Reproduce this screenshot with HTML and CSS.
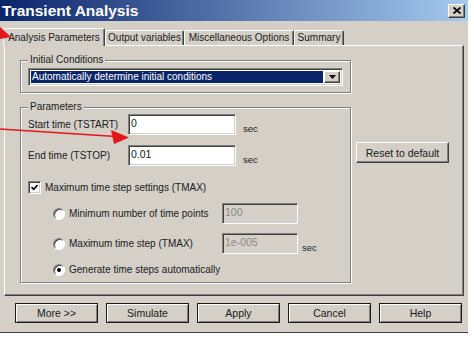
FILE: index.html
```html
<!DOCTYPE html>
<html lang="en">

<head>
    <meta charset="UTF-8" />
    <meta name="viewport" content="width=device-width, initial-scale=1.0" />
    <title>Transient Analysis</title>
    <link rel="stylesheet" href="styles.css">
</head>

<body>
    <div class="dialog">
        <!-- title bar -->
        <div class="title-bar">
            <span class="title">Transient Analysis</span>
            <div class="close-btn">
                <svg width="8" height="7" viewBox="0 0 8 7">
                    <path d="M0.5 0.5 L7.5 6.5 M7.5 0.5 L0.5 6.5" stroke="#000" stroke-width="1.8" />
                </svg>
            </div>
        </div>

        <!-- tabs -->
        <div class="tabs">
            <div class="tab active tab-analysis">Analysis Parameters</div>
            <div class="tab tab-output">Output variables</div>
            <div class="tab tab-misc">Miscellaneous Options</div>
            <div class="tab tab-summary">Summary</div>
        </div>

        <!-- tab page -->
        <div class="panel">
            <div class="panel-left">
                <fieldset class="group group-initial">
                    <legend>Initial Conditions</legend>
                    <div class="combo">
                        <div class="combo-value">Automatically determine initial conditions</div>
                        <div class="combo-arrow">
                            <svg width="7" height="4" viewBox="0 0 7 4">
                                <path d="M0 0 H7 L3.5 4 Z" fill="#000" />
                            </svg>
                        </div>
                    </div>
                </fieldset>

                <fieldset class="group group-params">
                    <legend>Parameters</legend>

                    <div class="field-row">
                        <span class="field-label">Start time (TSTART)</span>
                        <div class="text-box">0</div>
                        <span class="unit">sec</span>
                    </div>

                    <div class="field-row row-gap">
                        <span class="field-label">End time (TSTOP)</span>
                        <div class="text-box">0.01</div>
                        <span class="unit">sec</span>
                    </div>

                    <div class="check-row">
                        <span class="checkbox">
                            <svg width="7" height="7" viewBox="0 0 7 7">
                                <path d="M0.5 3 L2.7 5.3 L6.5 1" fill="none" stroke="#000" stroke-width="1.6" />
                            </svg>
                        </span>
                        <span>Maximum time step settings (TMAX)</span>
                    </div>

                    <div class="radio-row first">
                        <span class="radio-label">
                            <span class="radio"></span>
                            <span>Minimum number of time points</span>
                        </span>
                        <div class="text-box disabled">100</div>
                    </div>

                    <div class="radio-row">
                        <span class="radio-label">
                            <span class="radio"></span>
                            <span>Maximum time step (TMAX)</span>
                        </span>
                        <div class="text-box disabled">1e-005</div>
                        <span class="unit">sec</span>
                    </div>

                    <div class="radio-row last">
                        <span class="radio-label">
                            <span class="radio checked"></span>
                            <span>Generate time steps automatically</span>
                        </span>
                    </div>
                </fieldset>
            </div>

            <div class="panel-right">
                <div class="btn reset-btn">Reset to default</div>
            </div>
        </div>

        <!-- bottom buttons -->
        <div class="button-row">
            <div class="btn dlg-btn">More &gt;&gt;</div>
            <div class="btn dlg-btn">Simulate</div>
            <div class="btn dlg-btn">Apply</div>
            <div class="btn dlg-btn">Cancel</div>
            <div class="btn dlg-btn">Help</div>
        </div>

        <!-- red annotation arrows drawn over the screenshot -->
        <svg class="annotations" width="468" height="333" viewBox="0 0 468 333">
            <polygon points="0,27 11,37 0,39" fill="#e3161c" />
            <line x1="0" y1="129" x2="116" y2="136.5" stroke="#e3161c" stroke-width="1.6" />
            <polygon points="129,137.5 111,130 114,144" fill="#e3161c" />
        </svg>
    </div>
</body>

</html>
```

FILE: styles.css
```css
html,
body {
    margin: 0;
    background-color: #ffffff;
    font-family: "Liberation Sans", Arial, sans-serif;
    font-size: 10px;
    color: #1a1a1a;
}

.dialog {
    position: relative;
    width: 468px;
    height: 333px;
    box-sizing: border-box;
    background-color: #d4d0c8;
    border-bottom: 1px solid #404040;
    overflow: hidden;
}

/* title bar */
.title-bar {
    height: 21px;
    display: flex;
    align-items: center;
    justify-content: space-between;
    padding: 0 3px 0 2px;
    background: linear-gradient(to right, #0a246a, #a6caf0);
}

.title {
    color: #ffffff;
    font-weight: bold;
    font-size: 15.5px;
}

.close-btn {
    width: 17px;
    height: 14px;
    box-sizing: border-box;
    display: flex;
    align-items: center;
    justify-content: center;
    background-color: #d4d0c8;
    border: 1px solid;
    border-color: #ffffff #404040 #404040 #ffffff;
    box-shadow: inset -1px -1px 0 #808080;
}

/* tabs */
.tabs {
    display: flex;
    align-items: flex-end;
    height: 17px;
    margin-top: 7px;
    padding-left: 3px;
}

.tab {
    box-sizing: border-box;
    height: 15px;
    line-height: 13px;
    text-align: center;
    white-space: nowrap;
    border: 1px solid;
    border-bottom: none;
    border-color: #ffffff #404040 transparent #ffffff;
    border-radius: 2px 2px 0 0;
    box-shadow: inset -1px 0 0 #808080;
    background-color: #d4d0c8;
}

.tab.active {
    position: relative;
    z-index: 1;
    height: 18px;
    margin-bottom: -1px;
    padding-top: 2px;
}

.tab-analysis {
    width: 102px;
}

.tab-output {
    width: 79px;
}

.tab-misc {
    width: 110px;
}

.tab-summary {
    width: 50px;
}

/* tab page */
.panel {
    display: flex;
    margin: 0 4px;
    height: 251px;
    box-sizing: border-box;
    padding: 8px 0 0 15px;
    border: 1px solid;
    border-color: #ffffff #404040 #404040 #ffffff;
    box-shadow: inset -1px -1px 0 #808080;
}

.group {
    width: 331px;
    box-sizing: border-box;
    margin: 0;
    border: 1px solid #808080;
    box-shadow: inset 1px 1px 0 #ffffff, 1px 1px 0 #ffffff;
}

.group legend {
    padding: 0 2px;
    line-height: 12px;
    background-color: #d4d0c8;
}

.group-initial {
    padding: 2px 7px 6px 7px;
}

.group-params {
    margin-top: 8px;
    padding: 1px 7px 5px 7px;
}

/* combo box */
.combo {
    display: flex;
    height: 18px;
    box-sizing: border-box;
    padding: 1px;
    background-color: #ffffff;
    border: 1px solid;
    border-color: #808080 #ffffff #ffffff #808080;
    box-shadow: inset 1px 1px 0 #404040, inset -1px -1px 0 #d4d0c8;
}

.combo-value {
    flex: 1;
    margin: 1px;
    padding-left: 1px;
    line-height: 12px;
    background-color: #0a246a;
    color: #ffffff;
}

.combo-arrow {
    width: 16px;
    margin: 1px 1px 1px 0;
    box-sizing: border-box;
    display: flex;
    align-items: center;
    justify-content: center;
    background-color: #d4d0c8;
    border: 1px solid;
    border-color: #ffffff #404040 #404040 #ffffff;
    box-shadow: inset -1px -1px 0 #808080;
}

/* text fields */
.field-row {
    display: flex;
    align-items: center;
    height: 21px;
}

.row-gap {
    margin-top: 10px;
}

.field-label {
    width: 100px;
}

.text-box {
    width: 108px;
    height: 21px;
    box-sizing: border-box;
    padding: 2px 0 0 2px;
    line-height: 13px;
    font-size: 10.5px;
    background-color: #ffffff;
    border: 1px solid;
    border-color: #808080 #ffffff #ffffff #808080;
    box-shadow: inset 1px 1px 0 #404040, inset -1px -1px 0 #d4d0c8;
}

.text-box.disabled {
    width: 76px;
    background-color: #d4d0c8;
    color: #8a8a8a;
}

.unit {
    align-self: flex-end;
    margin-left: 7px;
    margin-bottom: 1px;
    font-size: 9.5px;
}

.radio-row .unit {
    margin-left: 4px;
}

/* checkbox */
.check-row {
    display: flex;
    align-items: center;
    gap: 4px;
    height: 15px;
    margin-top: 14px;
}

.checkbox {
    width: 13px;
    height: 13px;
    box-sizing: border-box;
    display: flex;
    align-items: center;
    justify-content: center;
    background-color: #ffffff;
    border: 1px solid;
    border-color: #808080 #ffffff #ffffff #808080;
    box-shadow: inset 1px 1px 0 #404040, inset -1px -1px 0 #d4d0c8;
}

/* radio buttons */
.radio-row {
    display: flex;
    align-items: center;
    height: 21px;
    margin-top: 9px;
}

.radio-row.first {
    margin-top: 8px;
}

.radio-row.last {
    height: 15px;
    margin-top: 8px;
}

.radio-label {
    display: flex;
    align-items: center;
    gap: 4px;
    width: 194px;
    flex-shrink: 0;
    padding-left: 25px;
    box-sizing: border-box;
    white-space: nowrap;
}

.radio {
    position: relative;
    flex-shrink: 0;
    width: 12px;
    height: 12px;
    box-sizing: border-box;
    border-radius: 50%;
    background-color: #ffffff;
    border: 1px solid;
    border-color: #808080 #ffffff #ffffff #808080;
    box-shadow: inset 1px 1px 0 #404040;
}

.radio.checked::after {
    content: "";
    position: absolute;
    left: 3px;
    top: 3px;
    width: 4px;
    height: 4px;
    border-radius: 50%;
    background-color: #000000;
}

/* buttons */
.panel-right {
    margin-left: 5px;
    padding-top: 88px;
}

.btn {
    box-sizing: border-box;
    display: flex;
    align-items: center;
    justify-content: center;
    background-color: #d4d0c8;
    white-space: nowrap;
}

.reset-btn {
    width: 93px;
    height: 21px;
    font-size: 10.5px;
    border: 1px solid;
    border-color: #ffffff #404040 #404040 #ffffff;
    box-shadow: inset -1px -1px 0 #808080;
}

.button-row {
    display: flex;
    gap: 8px;
    margin-top: 7px;
    padding-left: 15px;
}

.dlg-btn {
    width: 83px;
    height: 20px;
    font-size: 10.5px;
    border: 1px solid #1a1a1a;
    box-shadow: inset 1px 1px 0 #ffffff, inset -1px -1px 0 #808080;
}

/* annotation overlay */
.annotations {
    position: absolute;
    z-index: 2;
    left: 0;
    top: 0;
    pointer-events: none;
}
```
